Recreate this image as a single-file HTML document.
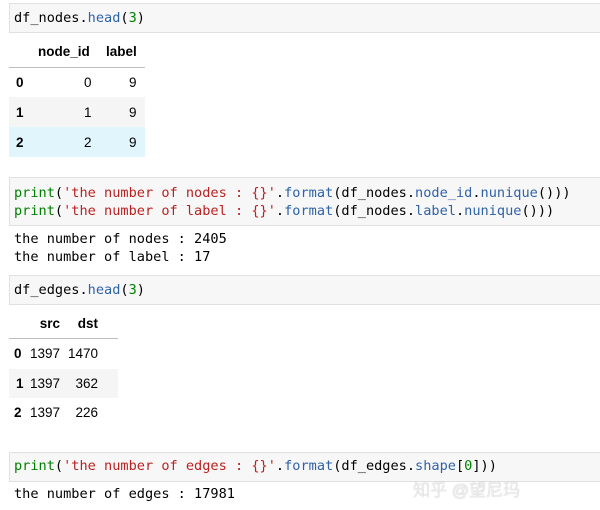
<!DOCTYPE html>
<html><head><meta charset="utf-8"><style>
body{margin:0;width:600px;height:510px;background:#fff;position:relative;overflow:hidden;font-family:"Liberation Sans",sans-serif}
.cell{position:absolute;left:9px;right:0;background:#f7f7f7;border:1px solid #e0e0e0;border-right:none}
.mono{font-family:"DejaVu Sans Mono","Liberation Mono",monospace;font-size:13.6px;line-height:18px;color:#000;white-space:pre;position:absolute;left:14px}
.g{color:#008000}.r{color:#ba2121}.b{color:#2f62a8}
.t{position:absolute;font-size:13.5px;color:#000;text-align:right}
.bd{font-weight:bold}
.row{position:absolute;left:9px}
</style></head><body>
<div class="cell" style="top:3px;height:28px"></div>
<div class="mono" style="top:9px">df_nodes.<span class="b">head</span>(<span class="g">3</span>)</div>

<div class="row" style="top:67px;width:136px;height:1px;background:#bdbdbd"></div>
<div class="row" style="top:97px;width:136px;height:30px;background:#f5f5f5"></div>
<div class="row" style="top:127px;width:136px;height:30px;background:#e1f5fc"></div>
<div class="t bd" style="left:38px;top:44px">node_id</div>
<div class="t bd" style="left:106px;top:44px">label</div>
<div class="t bd" style="left:16px;top:75px">0</div><div class="t" style="left:84px;top:75px">0</div><div class="t" style="left:129px;top:75px">9</div>
<div class="t bd" style="left:16px;top:105px">1</div><div class="t" style="left:84px;top:105px">1</div><div class="t" style="left:129px;top:105px">9</div>
<div class="t bd" style="left:16px;top:135px">2</div><div class="t" style="left:84px;top:135px">2</div><div class="t" style="left:129px;top:135px">9</div>

<div class="cell" style="top:177px;height:47px"></div>
<div class="mono" style="top:184px"><span class="g">print</span>(<span class="r">'the number of nodes : {}'</span>.<span class="b">format</span>(df_nodes.<span class="b">node_id</span>.<span class="b">nunique</span>()))
<span class="g">print</span>(<span class="r">'the number of label : {}'</span>.<span class="b">format</span>(df_nodes.<span class="b">label</span>.<span class="b">nunique</span>()))</div>
<div class="mono" style="top:230px">the number of nodes : 2405
the number of label : 17</div>

<div class="cell" style="top:275px;height:28px"></div>
<div class="mono" style="top:281px">df_edges.<span class="b">head</span>(<span class="g">3</span>)</div>

<div class="row" style="top:338px;width:109px;height:1px;background:#bdbdbd"></div>
<div class="row" style="top:369px;width:109px;height:29px;background:#f5f5f5"></div>
<div class="t bd" style="left:20px;width:40px;top:316px">src</div>
<div class="t bd" style="left:60px;width:38px;top:316px">dst</div>
<div class="t bd" style="left:14px;top:346px">0</div><div class="t" style="left:20px;width:40px;top:346px">1397</div><div class="t" style="left:60px;width:38px;top:346px">1470</div>
<div class="t bd" style="left:16px;top:376px">1</div><div class="t" style="left:20px;width:40px;top:376px">1397</div><div class="t" style="left:60px;width:38px;top:376px">362</div>
<div class="t bd" style="left:14px;top:405px">2</div><div class="t" style="left:20px;width:40px;top:405px">1397</div><div class="t" style="left:60px;width:38px;top:405px">226</div>

<div class="cell" style="top:452px;height:28px"></div>
<div class="mono" style="top:457px"><span class="g">print</span>(<span class="r">'the number of edges : {}'</span>.<span class="b">format</span>(df_edges.<span class="b">shape</span>[<span class="g">0</span>]))</div>
<div class="mono" style="top:485px">the number of edges : 17981</div>
<div style="position:absolute;left:413px;top:476px;font-family:'Liberation Sans','Noto Sans CJK SC',sans-serif;font-size:17px;font-weight:300;color:#f2f2f2;text-shadow:0 0 1px #999">知乎 @望尼玛</div>
</body></html>
